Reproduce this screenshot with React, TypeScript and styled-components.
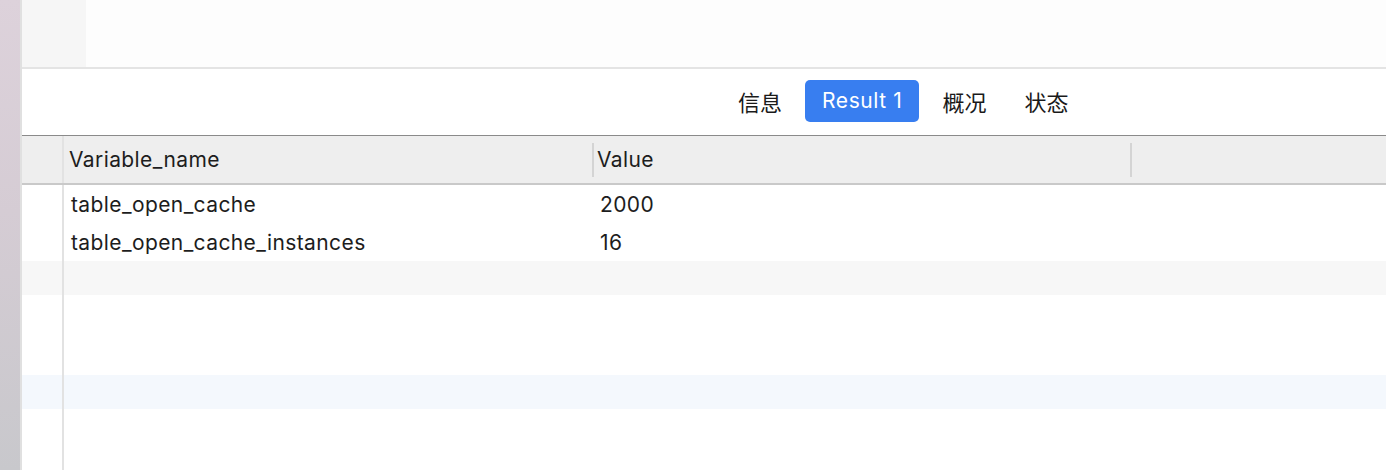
import React from 'react';
import styled, { createGlobalStyle } from 'styled-components';

const GlobalStyle = createGlobalStyle`
  html, body {
    margin: 0;
    padding: 0;
    background: #ffffff;
  }
  body {
    font-family: Inter, "Noto Sans", "Noto Sans CJK SC", sans-serif;
    color: #1d1d1d;
    -webkit-font-smoothing: antialiased;
  }
`;

const FONT = `Inter, "Noto Sans", "Noto Sans CJK SC", sans-serif`;
const CJK_FONT = `"Noto Sans CJK SC", "Noto Sans", sans-serif`;

interface Row {
  name?: string;
  value?: string;
  height: number;
  tone?: 'plain' | 'grey' | 'blue';
}

const rows: Row[] = [
  { name: 'table_open_cache', value: '2000', height: 39 },
  { name: 'table_open_cache_instances', value: '16', height: 37 },
  { height: 34, tone: 'grey' },
  { height: 40 },
  { height: 40 },
  { height: 34, tone: 'blue' },
  { height: 61 },
];

const tabs = ['信息', 'Result 1', '概况', '状态'];

const App = () => {
  return (
    <>
      <GlobalStyle />
      <Window>
        <SideStrip />
        <Main>
          <TopPane>
            <TopGutter />
          </TopPane>
          <TabBar>
            {tabs.map((t) => (
              <Tab key={t} active={t === 'Result 1'} cjk={t !== 'Result 1'}>
                {t}
              </Tab>
            ))}
          </TabBar>
          <Grid>
            <HeaderRow>
              <RowHead />
              <HeaderCell indent={5}>
                <span>Variable_name</span>
                <ColSeparator />
              </HeaderCell>
              <HeaderCell indent={3}>
                <span>Value</span>
                <ColSeparator />
              </HeaderCell>
              <HeaderCell />
            </HeaderRow>
            {rows.map((r, i) => (
              <BodyRow key={i} tone={r.tone ?? 'plain'} style={{ height: r.height }}>
                <RowHead />
                <Cell>{r.name}</Cell>
                <Cell indent={6}>{r.value}</Cell>
                <Cell />
              </BodyRow>
            ))}
          </Grid>
        </Main>
      </Window>
    </>
  );
};

const Window = styled.div`
  display: flex;
  width: 1386px;
  height: 470px;
  overflow: hidden;
  background: #ffffff;
`;

const SideStrip = styled.div`
  width: 20px;
  flex-shrink: 0;
  background: linear-gradient(180deg, #ddd2db 0%, #d5ccd4 45%, #c8c8cc 100%);
  border-right: 2px solid #e0e0e0;
`;

const Main = styled.div`
  flex: 1;
  display: flex;
  flex-direction: column;
  min-width: 0;
`;

const TopPane = styled.div`
  height: 67px;
  display: flex;
  background: #fdfdfd;
  border-bottom: 2px solid #e4e4e4;
`;

const TopGutter = styled.div`
  width: 64px;
  background: #f6f6f6;
`;

const TabBar = styled.div`
  height: 67px;
  box-sizing: border-box;
  display: flex;
  align-items: center;
  gap: 8px;
  padding: 0 0 3px 701px;
  background: #ffffff;
  border-bottom: 1px solid #8a8a8a;
`;

const Tab = styled.div<{ active?: boolean; cjk?: boolean }>`
  height: 42px;
  padding: 0 ${({ cjk }) => (cjk ? 15 : 17)}px;
  display: flex;
  align-items: center;
  border-radius: 5px;
  font-family: ${({ cjk }) => (cjk ? CJK_FONT : FONT)};
  font-size: ${({ cjk }) => (cjk ? 22 : 21)}px;
  letter-spacing: ${({ cjk }) => (cjk ? 0 : 0.6)}px;
  color: ${({ active }) => (active ? '#ffffff' : '#1a1a1a')};
  background: ${({ active }) => (active ? '#387ef0' : 'transparent')};
`;

const Grid = styled.div`
  flex: 1;
  display: flex;
  flex-direction: column;
  font-family: ${FONT};
  font-size: 21px;
  letter-spacing: 0.4px;
`;

const columns = '42px 530px 538px 1fr';

const HeaderRow = styled.div`
  display: grid;
  grid-template-columns: ${columns};
  height: 47px;
  background: #eeeeee;
  border-bottom: 2px solid #c9c9c9;
`;

const RowHead = styled.div`
  border-right: 2px solid #e2e2e2;
`;

const HeaderCell = styled.div<{ indent?: number }>`
  display: flex;
  align-items: center;
  justify-content: space-between;
  padding-left: ${({ indent }) => indent ?? 5}px;
  color: #1d1d1d;
`;

const ColSeparator = styled.div`
  width: 2px;
  height: 34px;
  background: #d4d4d4;
`;

const toneColor = {
  plain: '#ffffff',
  grey: '#f7f7f7',
  blue: '#f4f8fd',
};

const BodyRow = styled.div<{ tone: 'plain' | 'grey' | 'blue' }>`
  display: grid;
  grid-template-columns: ${columns};
  background: ${({ tone }) => toneColor[tone]};
`;

const Cell = styled.div<{ indent?: number }>`
  display: flex;
  align-items: center;
  padding-left: ${({ indent }) => indent ?? 7}px;
  color: #1d1d1d;
  white-space: nowrap;
`;

export default App;
